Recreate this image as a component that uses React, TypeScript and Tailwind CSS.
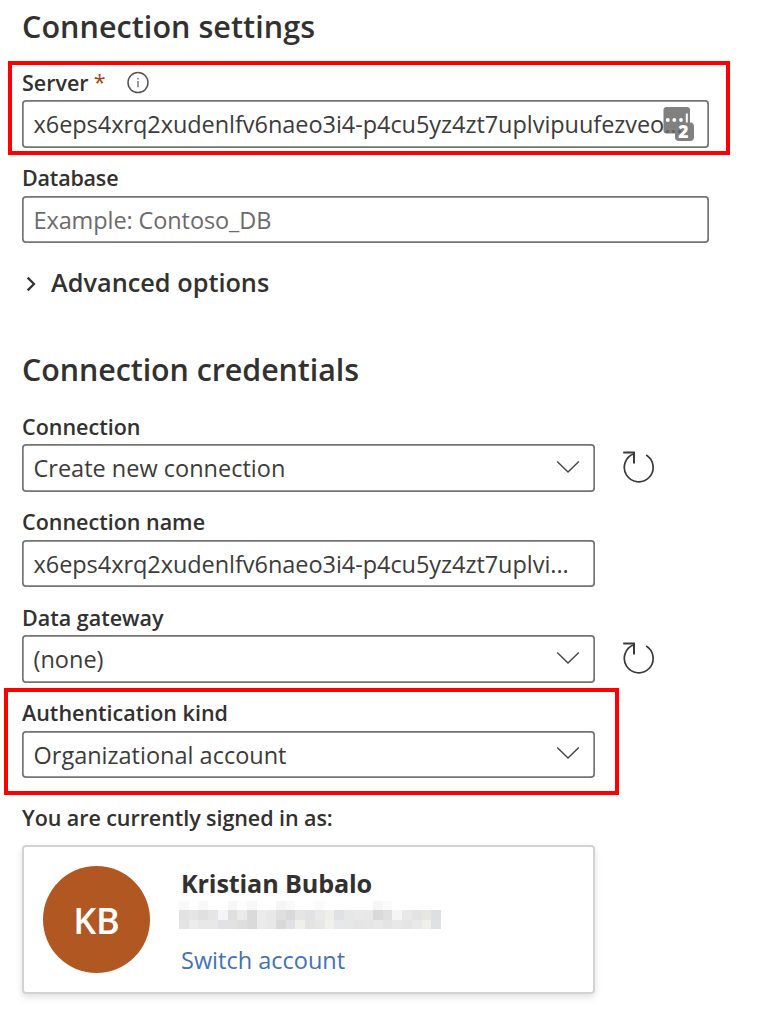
import type { ReactNode } from 'react';

function Highlight({ className }: { className: string }) {
  return <span aria-hidden="true" className={`pointer-events-none absolute border-4 border-[#ff0000] ${className}`} />;
}

function InfoIcon() {
  return (
    <svg width="24" height="24" viewBox="0 0 24 24" fill="none" className="ml-[20px]">
      <circle cx="12" cy="11.6" r="10" stroke="#555" strokeWidth="1.5" />
      <path d="M12 10v6.3" stroke="#777" strokeWidth="1.5" />
      <path d="M12 7v1.6" stroke="#777" strokeWidth="1.5" />
    </svg>
  );
}

function ChevronDown() {
  return (
    <svg width="24" height="14" viewBox="0 0 24 14" fill="none" className="mr-px mb-[2px] shrink-0">
      <path d="M1.2 1.5 12 12 22.8 1.5" stroke="#444" strokeWidth="1.4" />
    </svg>
  );
}

function RefreshButton() {
  return (
    <button aria-label="Refresh" className="mb-[2px] ml-[27px] flex h-[36px] w-[34px] items-center">
      <svg width="34" height="36" viewBox="0 0 34 36" fill="none" stroke="#3a3a3a">
        <path d="M24.2 6.1A14.4 14.4 0 1 1 12 4.8" strokeWidth="1.7" />
        <path d="M1.2 3.4H12V14.4" strokeWidth="2" />
      </svg>
    </button>
  );
}

function PasswordBadge() {
  return (
    <svg width="32" height="36" viewBox="0 0 32 36" className="absolute top-[6px] left-[641px]">
      <g opacity="0.84" fill="#686868">
        <rect x="0.5" y="1" width="26.5" height="26.5" rx="3" />
        <rect x="12" y="16.5" width="19" height="18.5" rx="4" />
      </g>
      <g fill="#fff">
        <circle cx="4.8" cy="14" r="1.9" />
        <circle cx="11.3" cy="14" r="1.9" />
        <circle cx="18" cy="14" r="1.9" />
        <rect x="22.8" y="7.5" width="2" height="9" />
        <text x="20.5" y="32.2" textAnchor="middle" fontSize="17.5" fontWeight="800" fontFamily="Open Sans, sans-serif">2</text>
      </g>
    </svg>
  );
}

function Label({ children, low }: { children: ReactNode; low?: boolean }) {
  return (
    <div
      className={`flex h-[36px] items-center text-[21.5px] font-semibold whitespace-nowrap ${low ? 'pt-px leading-[35px]' : 'leading-[36px]'}`}
    >
      {children}
    </div>
  );
}

function Box({ children, wide, dropdown }: { children: ReactNode; wide?: boolean; dropdown?: boolean }) {
  return (
    <div
      className={`flex h-[47.5px] items-center justify-between rounded-[4px] pr-[14px] pl-[11.5px] text-[23.5px] leading-[47px] whitespace-nowrap text-[#3c3b3a] shadow-[inset_0_0_0_1.7px_#747474] ${wide ? 'w-[687px]' : 'w-[572.5px]'}`}
    >
      <span className="pt-[2px]">{children}</span>
      {dropdown && <ChevronDown />}
    </div>
  );
}

const mosaic = [
  ['#f9f9f9', '#fff', '#f8f8f8', '#fff', '#fff', '#f7f7f7', '#fdfdfd', '#f8f8f8', '#fff', '#fff', '#f5f5f5', '#f9f9f9', '#fff', '#fff', '#fbfbfb', '#fff', '#fff', '#fff', '#fff', '#fff', '#f6f6f6', '#fafafa', '#fff', '#fff', '#fff', '#fff', '#fff'],
  ['#e2e2e2', '#e5e5e5', '#e0e0e0', '#e5e5e5', '#f5f5f5', '#dfdfdf', '#eaeaea', '#dadada', '#ebecec', '#e8e8e8', '#dfdfdf', '#d9d9d9', '#e5e5e5', '#e1e2e4', '#e9e9e9', '#eeeeeb', '#dfe1e4', '#e7e7e7', '#e9e9e9', '#e8e8e8', '#d9d9d9', '#e0e0e0', '#f5f5f5', '#e9e9e9', '#e3e3e3', '#e6e6e3', '#dedfe2'],
  ['#e4e4e2', '#ececec', '#e8e8e8', '#e8e8e8', '#e1e2e6', '#e2e2e2', '#dfdedd', '#dadada', '#ebebeb', '#e8e8e8', '#d9d9d9', '#e0e1e6', '#f0f0eb', '#e4e4e4', '#e7e7e7', '#f1f1ec', '#e7e8ea', '#e6e7e9', '#e5e5e3', '#e6e6e6', '#e8e8e8', '#e4e4e4', '#e8e8e8', '#e5e5e8', '#e9e9e9', '#f0f0ea', '#e0e1e6'],
];

export default function App() {
  return (
    <main className="h-[1024px] w-full overflow-hidden bg-white pl-[22px] font-['Open_Sans','Noto_Sans',sans-serif] text-[#323130]">
      <h1 className="h-[50px] text-[30.5px] leading-[52px] font-semibold tracking-[0.05px]">Connection settings</h1>

      <div className="relative mt-[14px]">
        <Label low>
          Server<span className="mb-[3px] ml-[5px] font-normal text-[#a4400e]">*</span>
          <InfoIcon />
        </Label>
        <div className="relative">
          <Box wide>
            <span className="tracking-[-0.05px]">x6eps4xrq2xudenlfv6naeo3i4-p4cu5yz4zt7uplvipuufezveo...</span>
          </Box>
          <PasswordBadge />
        </div>
        <Highlight className="-top-[3px] -left-[14px] h-[94px] w-[722px]" />
      </div>

      <div className="mt-[12px]">
        <Label>
          <span className="tracking-[-0.2px]">Database</span>
        </Label>
        <Box wide>
          <span className="tracking-[-0.1px] text-[#6b6b6b]">Example: Contoso_DB</span>
        </Box>
      </div>

      <div className="mt-[19px] flex h-[40px] items-center text-[25.3px] leading-[40px] font-semibold">
        <svg width="16" height="18" viewBox="0 0 16 18" fill="none" className="mt-[3px] mr-[13px]">
          <path d="M5.6 2.6 12 9 5.6 15.4" stroke="#323130" strokeWidth="2.2" />
        </svg>
        Advanced options
      </div>

      <h2 className="mt-[48px] h-[40px] text-[30.4px] leading-[40px] font-semibold tracking-[-0.05px]">Connection credentials</h2>

      <div className="mt-[18px] flex flex-col gap-[12px]">
        <div>
          <Label low>Connection</Label>
          <div className="flex items-center">
            <Box dropdown>Create new connection</Box>
            <RefreshButton />
          </div>
        </div>
        <div>
          <Label>Connection name</Label>
          <Box>
            <span className="tracking-[-0.05px]">x6eps4xrq2xudenlfv6naeo3i4-p4cu5yz4zt7uplvi...</span>
          </Box>
        </div>
        <div>
          <Label low>Data gateway</Label>
          <div className="flex items-center">
            <Box dropdown>(none)</Box>
            <RefreshButton />
          </div>
        </div>
        <div className="relative">
          <Label>Authentication kind</Label>
          <Box dropdown>Organizational account</Box>
          <Highlight className="-top-[7px] -left-[18px] h-[107px] w-[615px]" />
        </div>
      </div>

      <div className="mt-[22px]">
        <Label>
          <span className="tracking-[-0.07px]">You are currently signed in as:</span>
        </Label>
      </div>

      <section className="mt-[9px] flex h-[149px] w-[573px] items-center rounded-[4px] border-2 border-[#d2d2d2] pl-[19px] shadow-[0_3px_7px_rgba(0,0,0,0.13)]">
        <div className="mb-px flex size-[107px] shrink-0 items-center justify-center rounded-full bg-[#b05722] text-[36px] leading-[36px] font-semibold text-white">
          <span className="pt-[4px]">KB</span>
        </div>
        <div className="ml-[29px] flex flex-col pt-[5px]">
          <div className="h-[35px] pl-[2px] text-[25.2px] leading-[34px] font-bold tracking-[-0.15px]">Kristian Bubalo</div>
          <div className="flex h-[28px] w-[262px] flex-col">
            {mosaic.map((row, y) => (
              <div key={y} className="flex flex-1">
                {row.map((color, x) => (
                  <span key={x} className="flex-1" style={{ backgroundColor: color }} />
                ))}
              </div>
            ))}
          </div>
          <a className="mt-[13px] h-[36px] pl-[2px] text-[23.5px] leading-[36px] text-[#4272b8]">Switch account</a>
        </div>
      </section>
    </main>
  );
}
